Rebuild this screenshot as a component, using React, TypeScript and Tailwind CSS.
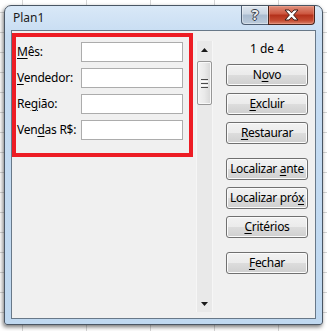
import React from "react";

const font = "font-['Segoe_UI','Noto_Sans',sans-serif]";

function U({ children }: { children: React.ReactNode }) {
  return <span className="underline decoration-[1px] underline-offset-[2px]">{children}</span>;
}

function Field({ label }: { label: React.ReactNode }) {
  return (
    <div className="flex items-center justify-between h-[20px]">
      <span className="pl-[1px] text-[12px] tracking-[-0.25px] leading-none text-black">{label}</span>
      <div className="w-[102px] h-[20px] bg-white border border-[#acacac]" />
    </div>
  );
}

function Btn({ children }: { children: React.ReactNode }) {
  return (
    <div className="w-[82px] h-[22px] rounded-[3px] border border-[#707070] shadow-[inset_0_0_0_1px_#fbfbfb] bg-[linear-gradient(to_bottom,#f2f2f2_0%,#ebebeb_50%,#dddddd_50%,#cfcfcf_100%)] flex items-center justify-center text-[12px] tracking-[-0.3px] leading-none text-black whitespace-nowrap">
      <span>{children}</span>
    </div>
  );
}

export default function App() {
  return (
    <div
      className={`${font} w-[327px] h-[331px] overflow-hidden bg-white [background-image:linear-gradient(to_right,#d6d6d6_1px,transparent_1px),linear-gradient(to_bottom,#d6d6d6_1px,transparent_1px)] [background-size:64px_20px] [background-position:22px_12px] pt-[5px] pl-[4px]`}
    >
      {/* Window */}
      <div className="w-[319px] h-[320px] rounded-t-[7px] rounded-b-[3px] border border-[#4a5664] bg-[linear-gradient(to_bottom,#d9e8f7_0px,#c6dcf2_30px,#bfd8f0_100%)] shadow-[-1px_2px_4px_rgba(0,0,0,0.55)] flex flex-col">
        {/* Title bar */}
        <div className="h-[24px] flex items-start justify-between pr-[7px]">
          <span className="pl-[8px] pt-[6px] text-[12px] leading-none text-[#1b1b1b]">Plan1</span>
          <div className="flex h-[19px]">
            <div className="w-[27px] h-[19px] rounded-bl-[4px] border border-t-0 border-r-0 border-[#4e5e72] shadow-[inset_0_0_0_1px_rgba(255,255,255,0.4)] bg-[linear-gradient(to_bottom,#dfe7f0_0%,#c9d5e2_45%,#a9bbcf_50%,#bccbdb_100%)] flex items-center justify-center">
              <span className="text-[14px] font-bold leading-none text-[#ededed] [text-shadow:1px_0_#36414e,-1px_0_#36414e,0_1px_#36414e,0_-1px_#36414e]">?</span>
            </div>
            <div className="w-[47px] h-[19px] rounded-br-[4px] border border-t-0 border-[#4a241c] shadow-[inset_0_0_0_1px_rgba(255,190,170,0.35)] bg-[linear-gradient(to_bottom,#e08f7b_0%,#cc553e_45%,#b3301a_50%,#c44a31_80%,#d8806a_100%)] flex items-center justify-center">
              <svg width="15" height="12" viewBox="0 0 15 12">
                <path
                  d="M1 1 H5 L7.5 3.8 L10 1 H14 L9.6 6 L14 11 H10 L7.5 8.2 L5 11 H1 L5.4 6 Z"
                  fill="#ffffff"
                  stroke="#3a1f1a"
                  strokeWidth="1"
                  strokeLinejoin="round"
                />
              </svg>
            </div>
          </div>
        </div>
        {/* Content */}
        <div className="ml-[6px] w-[305px] h-[289px] border border-[#687888] bg-[#f0f0f0] flex items-start">
          {/* Red annotated form area */}
          <div className="mt-[2px] w-[181px] h-[124px] border-[4px] border-[#ed1c24] pt-[5px] pr-[6px] flex flex-col gap-[6px]">
            <Field label={<><U>M</U>ês:</>} />
            <Field label={<><U>V</U>endedor:</>} />
            <Field label={<>Re<U>g</U>ião:</>} />
            <Field label={<>Ven<U>d</U>as R$:</>} />
          </div>
          {/* Scrollbar */}
          <div className="ml-[3px] mt-[10px] w-[17px] h-[271px] border-x border-[#f6f6f6] bg-[#e9e9e9] flex flex-col items-center">
            <div className="h-[18px] w-full flex items-center justify-center">
              <svg width="7" height="4" viewBox="0 0 7 4">
                <path d="M3.5 0 L7 4 H0 Z" fill="#1a1a1a" />
              </svg>
            </div>
            <div className="mt-[2px] w-[15px] h-[44px] rounded-[2px] border border-[#979797] shadow-[inset_0_0_0_1px_#f8f8f8] bg-[linear-gradient(to_right,#f3f3f3_0%,#e9e9e9_50%,#d6d6d6_100%)] flex flex-col items-center justify-center gap-[1px]">
              <div className="w-[7px] h-[1px] bg-[#4b4b4b]" />
              <div className="w-[7px] h-[1px] bg-[#fbfbfb]" />
              <div className="w-[7px] h-[1px] bg-[#4b4b4b]" />
              <div className="w-[7px] h-[1px] bg-[#fbfbfb]" />
              <div className="w-[7px] h-[1px] bg-[#4b4b4b]" />
            </div>
            <div className="flex-1" />
            <div className="h-[17px] w-full flex items-center justify-center">
              <svg width="7" height="4" viewBox="0 0 7 4">
                <path d="M0 0 H7 L3.5 4 Z" fill="#1a1a1a" />
              </svg>
            </div>
          </div>
          {/* Right column */}
          <div className="ml-[13px] w-[82px] flex flex-col items-stretch">
            <div className="mt-[12px] h-[14px] text-center text-[12px] leading-none text-black">1 de 4</div>
            <div className="mt-[7px] flex flex-col gap-[7px]">
              <Btn>N<U>o</U>vo</Btn>
              <Btn><U>E</U>xcluir</Btn>
              <Btn><U>R</U>estaurar</Btn>
            </div>
            <div className="mt-[14px] flex flex-col gap-[7px]">
              <Btn>Localizar <U>a</U>nte</Btn>
              <Btn>Localizar pró<U>x</U></Btn>
              <Btn><U>C</U>ritérios</Btn>
            </div>
            <div className="mt-[14px]">
              <Btn><U>F</U>echar</Btn>
            </div>
          </div>
        </div>
      </div>
    </div>
  );
}
